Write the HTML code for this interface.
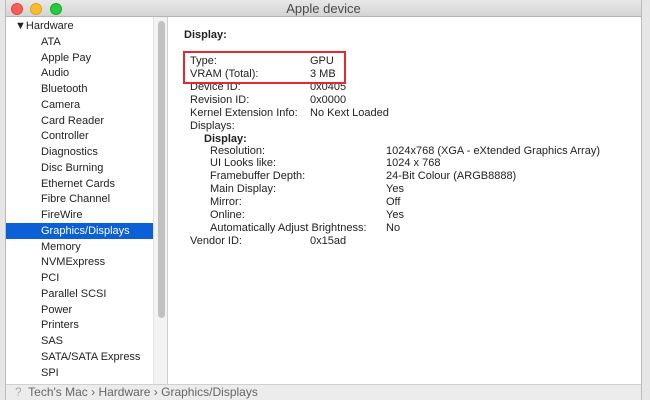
<!DOCTYPE html>
<html><head><style>
*{margin:0;padding:0;box-sizing:border-box}
body{width:650px;height:400px;background:#e6e6e6;font-family:"Liberation Sans",sans-serif;font-size:11px;color:#222;position:relative;overflow:hidden}
.win{position:absolute;left:5px;top:0;width:637px;height:400px;background:#fff;border-left:1px solid #bbb;border-right:1px solid #bbb}
.title{position:absolute;left:0;top:0;width:100%;height:17px;background:linear-gradient(#e8e8e8,#d4d4d4);border-bottom:1px solid #b5b5b5;text-align:center;font-size:13px;line-height:17px;color:#4a4a4a}
.dot{position:absolute;top:3px;width:12px;height:12px;border-radius:50%}
.side{position:absolute;left:0;top:17px;width:147px;height:367px;background:#fff}
.track{position:absolute;left:147px;top:17px;width:15px;height:367px;background:#f3f3f3;border-left:1px solid #e2e2e2;border-right:1px solid #d0d0d0}
.thumb{position:absolute;left:4px;top:4px;width:7px;height:297px;background:#c1c1c1;border-radius:4px}
.t{position:absolute;white-space:nowrap;line-height:13px}
.s{position:absolute;left:35px;white-space:nowrap}
.sel{position:absolute;left:0;top:206px;width:147px;height:16px;background:#0b5fd7}
.status{position:absolute;left:0;top:384px;width:100%;height:16px;background:#ececec;border-top:1px solid #d0d0d0;color:#666;font-size:12px;line-height:15px}
.box{position:absolute;left:177px;top:51px;width:163px;height:33px;border:2px solid #e8262d}
</style></head><body>
<div class="win">
<div class="title">Apple device
<div class="dot" style="left:5px;background:#fc5f57;border:1px solid #e0443e"></div>
<div class="dot" style="left:24px;background:#fdbc2e;border:1px solid #dea123"></div>
<div class="dot" style="left:44px;background:#28c840;border:1px solid #1aab29"></div>
</div>
<div class="side">
<div class="sel"></div>
<div class="t" style="left:9px;top:3px">▼Hardware</div>
</div>
<div style="position:absolute;left:0;top:0">
<div class="s t" style="top:36px">ATA</div>
<div class="s t" style="top:52px">Apple Pay</div>
<div class="s t" style="top:67px">Audio</div>
<div class="s t" style="top:83px">Bluetooth</div>
<div class="s t" style="top:99px">Camera</div>
<div class="s t" style="top:115px">Card Reader</div>
<div class="s t" style="top:130px">Controller</div>
<div class="s t" style="top:146px">Diagnostics</div>
<div class="s t" style="top:162px">Disc Burning</div>
<div class="s t" style="top:178px">Ethernet Cards</div>
<div class="s t" style="top:193px">Fibre Channel</div>
<div class="s t" style="top:209px">FireWire</div>
<div class="s t" style="top:225px;color:#fff">Graphics/Displays</div>
<div class="s t" style="top:241px">Memory</div>
<div class="s t" style="top:256px">NVMExpress</div>
<div class="s t" style="top:272px">PCI</div>
<div class="s t" style="top:288px">Parallel SCSI</div>
<div class="s t" style="top:304px">Power</div>
<div class="s t" style="top:319px">Printers</div>
<div class="s t" style="top:335px">SAS</div>
<div class="s t" style="top:351px">SATA/SATA Express</div>
<div class="s t" style="top:367px">SPI</div>
</div>
<div class="track"><div class="thumb"></div></div>
<div style="position:absolute;left:-5px;top:0">
<div class="t" style="left:183px;top:29px;font-weight:bold">Display:</div>
<div class="t" style="left:189px;top:55px">Type:</div><div class="t" style="left:309px;top:55px">GPU</div>
<div class="t" style="left:189px;top:68px">VRAM (Total):</div><div class="t" style="left:309px;top:68px">3 MB</div>
<div class="t" style="left:189px;top:81px">Device ID:</div><div class="t" style="left:309px;top:81px">0x0405</div>
<div class="t" style="left:189px;top:94px">Revision ID:</div><div class="t" style="left:309px;top:94px">0x0000</div>
<div class="t" style="left:189px;top:107px">Kernel Extension Info:</div><div class="t" style="left:309px;top:107px">No Kext Loaded</div>
<div class="t" style="left:189px;top:120px">Displays:</div>
<div class="t" style="left:203px;top:133px;font-weight:bold">Display:</div>
<div class="t" style="left:209px;top:145px">Resolution:</div><div class="t" style="left:385px;top:145px">1024x768 (XGA - eXtended Graphics Array)</div>
<div class="t" style="left:209px;top:157px">UI Looks like:</div><div class="t" style="left:385px;top:157px">1024 x 768</div>
<div class="t" style="left:209px;top:170px">Framebuffer Depth:</div><div class="t" style="left:385px;top:170px">24-Bit Colour (ARGB8888)</div>
<div class="t" style="left:209px;top:183px">Main Display:</div><div class="t" style="left:385px;top:183px">Yes</div>
<div class="t" style="left:209px;top:196px">Mirror:</div><div class="t" style="left:385px;top:196px">Off</div>
<div class="t" style="left:209px;top:209px">Online:</div><div class="t" style="left:385px;top:209px">Yes</div>
<div class="t" style="left:209px;top:222px">Automatically Adjust Brightness:</div><div class="t" style="left:385px;top:222px">No</div>
<div class="t" style="left:189px;top:235px">Vendor ID:</div><div class="t" style="left:309px;top:235px">0x15ad</div>
</div>
<div class="box"></div>
<div class="status"><span style="color:#aaa;margin-left:9px">?</span>&nbsp; Tech's Mac › Hardware › Graphics/Displays</div>
</div>
</body></html>
